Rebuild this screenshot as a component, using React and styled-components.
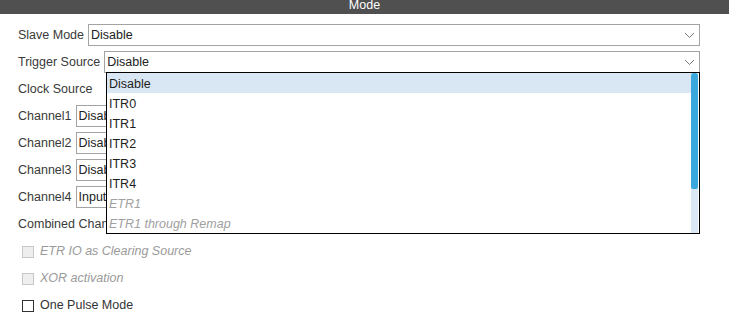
import React from "react";
import styled, {createGlobalStyle} from "styled-components";

const GlobalStyle = createGlobalStyle`
    body {
        margin: 0;
        background: #ffffff;
        font-family: "Liberation Sans", Arial, sans-serif;
    }
`

const Panel = styled.div`
    width: 729px;
    height: 316px;
    overflow: hidden;
    position: relative;
    background: #ffffff;
`

const Header = styled.div`
    height: 14px;
    background: #4f504f;
    color: #ffffff;
    font-size: 12.5px;
    line-height: 10px;
    text-align: center;
    overflow: hidden;
`

const Form = styled.div`
    display: flex;
    flex-direction: column;
    gap: 5px;
    padding: 10px 29px 0 18px;
`

const Row = styled.div`
    display: flex;
    align-items: center;
    gap: 4px;
    height: 22px;
    line-height: 24px;
    position: relative;
    padding-left: ${p => p.$indent || 0}px;
`

const Label = styled.span`
    font-size: 12.5px;
    color: #3a3a3a;
    white-space: nowrap;
`

const Select = styled.div`
    flex: 1;
    height: 22px;
    box-sizing: border-box;
    border: 1px solid #a3a3a3;
    display: flex;
    align-items: center;
    justify-content: space-between;
    padding: 0 4px 0 2px;
    font-size: 12.5px;
    color: #222;
    min-width: 0;
`

const Chevron = () => (
    <svg width="11" height="7" viewBox="0 0 11 7">
        <path d="M1 1 L5.5 5.5 L10 1" fill="none" stroke="#7a7a7a" strokeWidth="1" />
    </svg>
)

const Check = styled.span`
    width: 12px;
    height: 12px;
    box-sizing: border-box;
    border: 1px solid ${p => p.$disabled ? "#c8c8c8" : "#333"};
    background: ${p => p.$disabled ? "#eeeeee" : "#fff"};
    margin: 2px 2px 0 0;
    flex: none;
`

const CheckText = styled.span`
    font-size: 12.5px;
    color: ${p => p.$disabled ? "#9a9a9a" : "#333"};
    font-style: ${p => p.$disabled ? "italic" : "normal"};
`

const Dropdown = styled.div`
    position: absolute;
    left: 106px;
    top: 72px;
    width: 594px;
    height: 162px;
    box-sizing: border-box;
    border: 1px solid #000;
    background: #fff;
    display: flex;
    z-index: 2;
`

const OptionList = styled.div`
    flex: 1;
    display: flex;
    flex-direction: column;
`

const Option = styled.div`
    height: 20px;
    line-height: 22px;
    overflow: hidden;
    padding-left: 2px;
    font-size: 12.5px;
    background: ${p => p.$selected ? "#d9e7f4" : "transparent"};
    color: ${p => p.$disabled ? "#a0a0a0" : "#1e1e1e"};
    font-style: ${p => p.$disabled ? "italic" : "normal"};
`

const ScrollTrack = styled.div`
    width: 7px;
    background: #dae8f5;
    margin-right: 1px;
`

const ScrollThumb = styled.div`
    height: 116px;
    background: #3aa8dc;
    border-radius: 3px 3px 2px 2px;
`

const options = [
    {text: "Disable", selected: true},
    {text: "ITR0"},
    {text: "ITR1"},
    {text: "ITR2"},
    {text: "ITR3"},
    {text: "ITR4"},
    {text: "ETR1", disabled: true},
    {text: "ETR1 through Remap", disabled: true}
]

export default function App() {
    return (
        <Panel>
            <GlobalStyle />
            <Header>Mode</Header>
            <Form>
                <Row>
                    <Label>Slave Mode</Label>
                    <Select>Disable<Chevron /></Select>
                </Row>
                <Row>
                    <Label>Trigger Source</Label>
                    <Select>Disable<Chevron /></Select>
                </Row>
                <Row>
                    <Label>Clock Source</Label>
                </Row>
                {["Disable", "Disable", "Disable", "Input"].map((val, idx) => (
                    <Row key={idx}>
                        <Label>Channel{idx + 1}</Label>
                        <Select>{val}</Select>
                    </Row>
                ))}
                <Row>
                    <Label>Combined Channels</Label>
                </Row>
                <Row $indent={4}>
                    <Check $disabled />
                    <CheckText $disabled>ETR IO as Clearing Source</CheckText>
                </Row>
                <Row $indent={4}>
                    <Check $disabled />
                    <CheckText $disabled>XOR activation</CheckText>
                </Row>
                <Row $indent={4}>
                    <Check />
                    <CheckText>One Pulse Mode</CheckText>
                </Row>
            </Form>
            <Dropdown>
                <OptionList>
                    {options.map((o, idx) => (
                        <Option key={idx} $selected={o.selected} $disabled={o.disabled}>{o.text}</Option>
                    ))}
                </OptionList>
                <ScrollTrack>
                    <ScrollThumb />
                </ScrollTrack>
            </Dropdown>
        </Panel>
    )
}
